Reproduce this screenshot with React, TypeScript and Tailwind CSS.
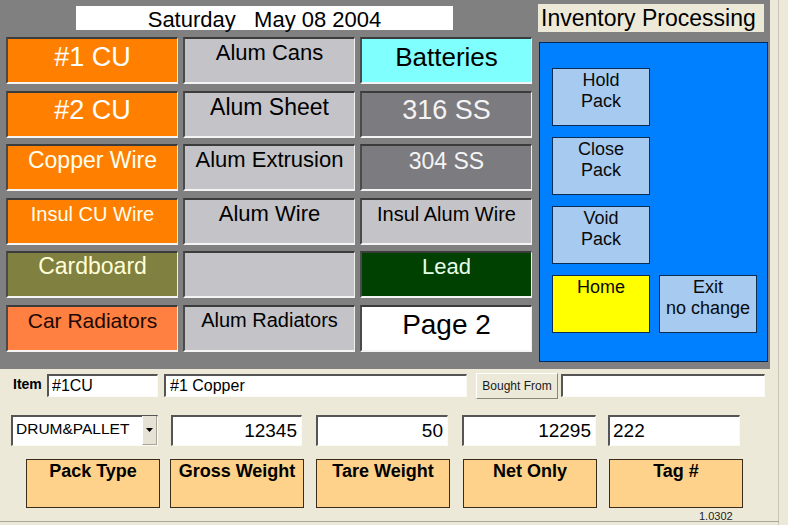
import React from "react";

type Cell = {
  label: string;
  bg: string;
  fg: string;
  size: string;
  pt: string;
};

const cells: Cell[] = [
  { label: "#1 CU", bg: "bg-[#ff8000]", fg: "text-white", size: "text-[27px]", pt: "pt-[5px]" },
  { label: "Alum Cans", bg: "bg-[#c4c4c8]", fg: "text-black", size: "text-[22px]", pt: "pt-[3px]" },
  { label: "Batteries", bg: "bg-[#80ffff]", fg: "text-black", size: "text-[26px]", pt: "pt-[5px]" },
  { label: "#2 CU", bg: "bg-[#ff8000]", fg: "text-white", size: "text-[27px]", pt: "pt-[4px]" },
  { label: "Alum Sheet", bg: "bg-[#c4c4c8]", fg: "text-black", size: "text-[23px]", pt: "pt-[3px]" },
  { label: "316 SS", bg: "bg-[#7c7b7f]", fg: "text-[#f4f4f4]", size: "text-[27px]", pt: "pt-[4px]" },
  { label: "Copper Wire", bg: "bg-[#ff8000]", fg: "text-[#fffff0]", size: "text-[23px]", pt: "pt-[3px]" },
  { label: "Alum Extrusion", bg: "bg-[#c4c4c8]", fg: "text-black", size: "text-[22px]", pt: "pt-[3px]" },
  { label: "304 SS", bg: "bg-[#7c7b7f]", fg: "text-[#f4f4f4]", size: "text-[23px]", pt: "pt-[4px]" },
  { label: "Insul CU Wire", bg: "bg-[#ff8000]", fg: "text-[#fffff0]", size: "text-[20px]", pt: "pt-[4px]" },
  { label: "Alum Wire", bg: "bg-[#c4c4c8]", fg: "text-black", size: "text-[22px]", pt: "pt-[3px]" },
  { label: "Insul Alum Wire", bg: "bg-[#c4c4c8]", fg: "text-black", size: "text-[20px]", pt: "pt-[4px]" },
  { label: "Cardboard", bg: "bg-[#808040]", fg: "text-[#ffffd8]", size: "text-[23px]", pt: "pt-[2px]" },
  { label: "", bg: "bg-[#c4c4c8]", fg: "text-black", size: "text-[22px]", pt: "pt-[3px]" },
  { label: "Lead", bg: "bg-[#004000]", fg: "text-[#e8ffe8]", size: "text-[22px]", pt: "pt-[3px]" },
  { label: "Car Radiators", bg: "bg-[#ff8040]", fg: "text-[#200800]", size: "text-[21px]", pt: "pt-[3px]" },
  { label: "Alum Radiators", bg: "bg-[#c4c4c8]", fg: "text-black", size: "text-[20px]", pt: "pt-[3px]" },
  { label: "Page 2", bg: "bg-white", fg: "text-black", size: "text-[28px]", pt: "pt-[4px]" },
];

const sunken =
  "border-t-2 border-l-2 border-b border-r border-t-[#555555] border-l-[#555555] border-b-[#fbfbf6] border-r-[#fbfbf6] bg-white outline-none";

function PackButton({ lines, yellow }: { lines: string[]; yellow?: boolean }) {
  return (
    <button
      className={`w-[98px] h-[58px] border border-[#0c2c52] flex flex-col items-center pt-[1px] text-[18px] leading-[21px] text-[#0a0a0a] ${
        yellow ? "bg-[#ffff00]" : "bg-[#a6caf0]"
      }`}
    >
      {lines.map((l) => (
        <span key={l}>{l}</span>
      ))}
    </button>
  );
}

function TagButton({ label, ml }: { label: string; ml: string }) {
  return (
    <button
      className={`${ml} w-[134px] h-[49px] bg-[#fed28a] border border-[#3a2c18] flex justify-center pt-[2px] text-[18px] leading-none font-bold text-black`}
    >
      {label}
    </button>
  );
}

export default function App() {
  return (
    <div className="w-[788px] h-[525px] bg-[#ece9d8] overflow-hidden font-['Liberation_Sans',Arial,sans-serif]">
      <div className="w-[779px] h-[525px] border-r border-[#c9c6b8] flex flex-col">
        {/* top gray panel */}
        <div className="w-[770px] h-[369px] shrink-0 bg-[#808080] flex flex-col pt-[4px]">
          <div className="flex items-center h-[28px]">
            <div className="ml-[76px] w-[377px] h-[24px] bg-white text-center text-[22px] leading-[27px] text-black whitespace-pre">
              {"Saturday   May 08 2004"}
            </div>
            <div className="ml-[85px] w-[226px] h-[28px] bg-[#ece9d8] pl-[3px] text-[23px] leading-[28px] text-black whitespace-nowrap">
              Inventory Processing
            </div>
          </div>

          <div className="flex mt-[5px]">
            <div className="ml-[6px] grid grid-cols-[172px_172px_172px] auto-rows-[47px] gap-x-[5px] gap-y-[6.6px]">
              {cells.map((c, i) => (
                <button
                  key={i}
                  className={`${c.bg} ${c.fg} ${c.size} ${c.pt} flex justify-center leading-none whitespace-nowrap border-t-2 border-l-2 border-b-2 border-r border-t-[#3c3c3c] border-l-[#4a4a4a] border-b-[#f4f4f4] border-r-[#f0f0f0]`}
                >
                  {c.label}
                </button>
              ))}
            </div>

            <div className="ml-[7px] mt-[5px] w-[229px] h-[320px] bg-[#0080ff] border border-[#00285a] flex flex-col pl-[12px] pt-[25px] gap-y-[11px]">
              <PackButton lines={["Hold", "Pack"]} />
              <PackButton lines={["Close", "Pack"]} />
              <PackButton lines={["Void", "Pack"]} />
              <div className="flex gap-x-[9px]">
                <PackButton lines={["Home"]} yellow />
                <PackButton lines={["Exit", "no change"]} />
              </div>
            </div>
          </div>
        </div>

        {/* bottom form */}
        <div className="w-[779px] h-[153px] shrink-0 border-b border-[#a9a698] flex flex-col pt-[4px] text-black">
          <div className="flex items-start h-[26px] shrink-0">
            <span className="ml-[13px] w-[34px] mt-[4px] text-[14px] font-bold leading-none">Item</span>
            <input readOnly value="#1CU" className={`${sunken} mt-[1px] w-[111px] h-[23px] pl-[3px] text-[16px]`} />
            <input readOnly value="#1 Copper" className={`${sunken} mt-[1px] ml-[6px] w-[303px] h-[23px] pl-[4px] text-[16px]`} />
            <button className="ml-[9px] w-[82px] h-[26px] bg-[#ece9d8] border border-t-white border-l-white border-b-[#8a877a] border-r-[#8a877a] text-[12px] text-[#1a1a1a]">
              Bought From
            </button>
            <input readOnly value="" className={`${sunken} mt-[1px] ml-[3px] w-[204px] h-[23px]`} />
          </div>

          <div className="flex h-[31px] mt-[16px] shrink-0">
            <div className={`${sunken} ml-[11px] w-[147px] h-[31px] flex`}>
              <span className="flex-1 pl-[3px] pt-[3px] text-[15.5px] leading-[18px]">DRUM&amp;PALLET</span>
              <span className="w-[15px] h-[29px] -mt-[1px] bg-[#e6e3d6] border-l border-l-white border-b border-r border-b-[#a8a598] border-r-[#a8a598] flex items-center justify-center">
                <svg width="7" height="4" viewBox="0 0 7 4">
                  <path d="M0 0h7L3.5 4z" fill="#000" />
                </svg>
              </span>
            </div>
            <input readOnly value="12345" className={`${sunken} ml-[13px] w-[131px] h-[31px] pr-[4px] text-right text-[19px]`} />
            <input readOnly value="50" className={`${sunken} ml-[14px] w-[132px] h-[31px] pr-[4px] text-right text-[19px]`} />
            <input readOnly value="12295" className={`${sunken} ml-[14px] w-[134px] h-[31px] pr-[4px] text-right text-[19px]`} />
            <input readOnly value="222" className={`${sunken} ml-[12px] w-[132px] h-[31px] pl-[3px] text-[19px]`} />
          </div>

          <div className="flex h-[49px] mt-[13px] shrink-0">
            <TagButton label="Pack Type" ml="ml-[26px]" />
            <TagButton label="Gross Weight" ml="ml-[10px]" />
            <TagButton label="Tare Weight" ml="ml-[12px]" />
            <TagButton label="Net Only" ml="ml-[13px]" />
            <TagButton label="Tag #" ml="ml-[12px]" />
          </div>

          <div className="mt-[3px] h-[10px] shrink-0 pl-[699px] text-[11px] leading-[10px] text-[#222]">1.0302</div>
        </div>
      </div>
    </div>
  );
}
